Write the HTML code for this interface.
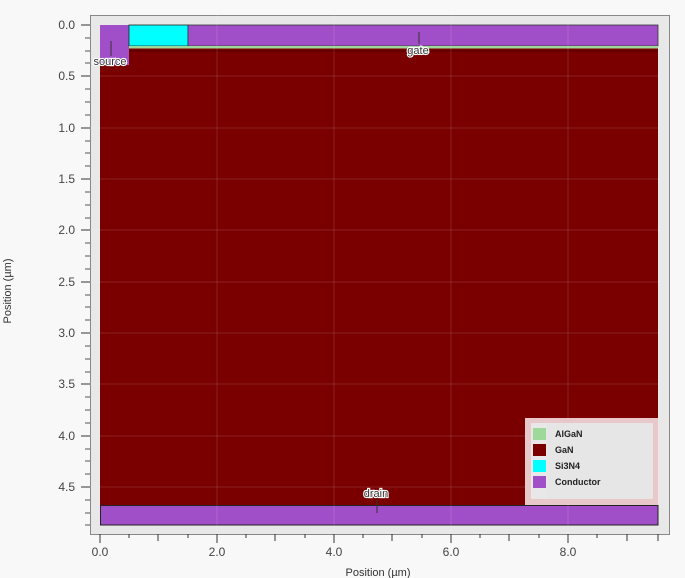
<!DOCTYPE html>
<html><head><meta charset="utf-8"><style>
html,body{margin:0;padding:0;background:#f8f8f8;width:685px;height:578px;overflow:hidden}
svg text{font-family:"Liberation Sans",sans-serif}
</style></head><body>
<svg width="685" height="578" viewBox="0 0 685 578" xmlns="http://www.w3.org/2000/svg">
<rect width="685" height="578" fill="#f8f8f8"/>
<rect x="90.5" y="15.5" width="579" height="519" fill="#e8e8e8" stroke="#888" stroke-width="1"/>
<!-- GaN -->
<rect x="100" y="48" width="558" height="457" fill="#7a0000"/>
<!-- source -->
<rect x="100" y="25" width="29" height="40" fill="#a04fc8"/>
<!-- Si3N4 -->
<rect x="129" y="25" width="59" height="21" fill="#00ffff" stroke="#222" stroke-width="0.8"/>
<!-- gate -->
<rect x="188" y="25" width="470" height="21" fill="#a04fc8" stroke="#333" stroke-width="0.8"/>
<!-- AlGaN -->
<rect x="129" y="46" width="529" height="2.5" fill="#9ed89a"/>
<line x1="129" y1="51" x2="658" y2="51" stroke="#500000" stroke-width="1"/>
<!-- drain -->
<rect x="100.5" y="505.5" width="557.5" height="19.5" fill="#a04fc8" stroke="#222" stroke-width="1"/>
<!-- grid -->
<g stroke="#ffffff" stroke-opacity="0.12" stroke-width="1">
<line x1="217" y1="15" x2="217" y2="534"/><line x1="334" y1="15" x2="334" y2="534"/><line x1="451" y1="15" x2="451" y2="534"/><line x1="568" y1="15" x2="568" y2="534"/>
<line x1="90" y1="76" x2="669" y2="76"/><line x1="90" y1="128" x2="669" y2="128"/><line x1="90" y1="179" x2="669" y2="179"/><line x1="90" y1="230" x2="669" y2="230"/><line x1="90" y1="282" x2="669" y2="282"/><line x1="90" y1="333" x2="669" y2="333"/><line x1="90" y1="384" x2="669" y2="384"/><line x1="90" y1="436" x2="669" y2="436"/><line x1="90" y1="487" x2="669" y2="487"/>
</g>
<!-- labels -->
<g stroke="#333" stroke-width="1">
<line x1="111" y1="41" x2="111" y2="56"/>
<line x1="419" y1="32" x2="419" y2="44"/>
<line x1="377" y1="500" x2="377" y2="513"/>
</g>
<g font-size="11" fill="#333" stroke="#fff" stroke-width="2.2" paint-order="stroke">
<text x="110" y="65" text-anchor="middle">source</text>
<text x="418" y="54" text-anchor="middle">gate</text>
<text x="376" y="497" text-anchor="middle">drain</text>
</g>
<!-- legend -->
<rect x="525" y="418" width="133" height="87" fill="#e8c8c8"/>
<rect x="531" y="423" width="122" height="76" fill="#e8e8e8"/>
<rect x="547" y="423" width="106" height="76" fill="#e6e6e6"/>
<rect x="533" y="428" width="13" height="12" fill="#9ed89a"/>
<rect x="533" y="444" width="13" height="12" fill="#7a0000"/>
<rect x="533" y="460" width="13" height="12" fill="#00ffff"/>
<rect x="533" y="476" width="13" height="12" fill="#a04fc8"/>
<g font-size="9" font-weight="bold" fill="#222">
<text x="555" y="437">AlGaN</text><text x="555" y="453">GaN</text><text x="555" y="469">Si3N4</text><text x="555" y="485">Conductor</text>
</g>
<!-- y ticks -->
<g stroke="#333" stroke-width="1">
<line x1="81" y1="25" x2="90" y2="25"/><line x1="81" y1="76" x2="90" y2="76"/><line x1="81" y1="128" x2="90" y2="128"/><line x1="81" y1="179" x2="90" y2="179"/><line x1="81" y1="230" x2="90" y2="230"/><line x1="81" y1="282" x2="90" y2="282"/><line x1="81" y1="333" x2="90" y2="333"/><line x1="81" y1="384" x2="90" y2="384"/><line x1="81" y1="436" x2="90" y2="436"/><line x1="81" y1="487" x2="90" y2="487"/>
</g>
<g stroke="#555" stroke-width="1" id="minor"></g>
<g font-size="12" fill="#444" text-anchor="end">
<text x="75" y="29">0.0</text><text x="75" y="80">0.5</text><text x="75" y="132">1.0</text><text x="75" y="183">1.5</text><text x="75" y="234">2.0</text><text x="75" y="286">2.5</text><text x="75" y="337">3.0</text><text x="75" y="388">3.5</text><text x="75" y="440">4.0</text><text x="75" y="491">4.5</text>
</g>
<!-- x ticks -->
<g stroke="#333" stroke-width="1">
<line x1="100" y1="534" x2="100" y2="543"/><line x1="217" y1="534" x2="217" y2="543"/><line x1="334" y1="534" x2="334" y2="543"/><line x1="451" y1="534" x2="451" y2="543"/><line x1="568" y1="534" x2="568" y2="543"/>
<line x1="158" y1="534" x2="158" y2="541"/><line x1="275" y1="534" x2="275" y2="541"/><line x1="392" y1="534" x2="392" y2="541"/><line x1="509" y1="534" x2="509" y2="541"/><line x1="627" y1="534" x2="627" y2="541"/><line x1="658" y1="534" x2="658" y2="541"/>
<line x1="129" y1="534" x2="129" y2="538"/><line x1="188" y1="534" x2="188" y2="538"/><line x1="246" y1="534" x2="246" y2="538"/><line x1="305" y1="534" x2="305" y2="538"/><line x1="363" y1="534" x2="363" y2="538"/><line x1="422" y1="534" x2="422" y2="538"/><line x1="480" y1="534" x2="480" y2="538"/><line x1="539" y1="534" x2="539" y2="538"/><line x1="597" y1="534" x2="597" y2="538"/>
</g>
<g font-size="12" fill="#444" text-anchor="middle">
<text x="100" y="556">0.0</text><text x="217" y="556">2.0</text><text x="334" y="556">4.0</text><text x="451" y="556">6.0</text><text x="568" y="556">8.0</text>
</g>
<text x="378" y="576" font-size="11" fill="#333" text-anchor="middle">Position (µm)</text>
<text transform="translate(11,291) rotate(-90)" font-size="11" fill="#333" text-anchor="middle">Position (µm)</text>
<!-- y minor ticks -->
<g stroke="#555" stroke-width="1">
<line x1="85" y1="38" x2="90" y2="38"/><line x1="85" y1="51" x2="90" y2="51"/><line x1="85" y1="63" x2="90" y2="63"/>
<line x1="85" y1="89" x2="90" y2="89"/><line x1="85" y1="102" x2="90" y2="102"/><line x1="85" y1="115" x2="90" y2="115"/>
<line x1="85" y1="141" x2="90" y2="141"/><line x1="85" y1="153" x2="90" y2="153"/><line x1="85" y1="166" x2="90" y2="166"/>
<line x1="85" y1="192" x2="90" y2="192"/><line x1="85" y1="205" x2="90" y2="205"/><line x1="85" y1="218" x2="90" y2="218"/>
<line x1="85" y1="243" x2="90" y2="243"/><line x1="85" y1="256" x2="90" y2="256"/><line x1="85" y1="269" x2="90" y2="269"/>
<line x1="85" y1="295" x2="90" y2="295"/><line x1="85" y1="307" x2="90" y2="307"/><line x1="85" y1="320" x2="90" y2="320"/>
<line x1="85" y1="346" x2="90" y2="346"/><line x1="85" y1="359" x2="90" y2="359"/><line x1="85" y1="372" x2="90" y2="372"/>
<line x1="85" y1="397" x2="90" y2="397"/><line x1="85" y1="410" x2="90" y2="410"/><line x1="85" y1="423" x2="90" y2="423"/>
<line x1="85" y1="449" x2="90" y2="449"/><line x1="85" y1="461" x2="90" y2="461"/><line x1="85" y1="474" x2="90" y2="474"/>
<line x1="85" y1="500" x2="90" y2="500"/><line x1="85" y1="513" x2="90" y2="513"/><line x1="85" y1="525" x2="90" y2="525"/>
</g>
</svg>
</body></html>
